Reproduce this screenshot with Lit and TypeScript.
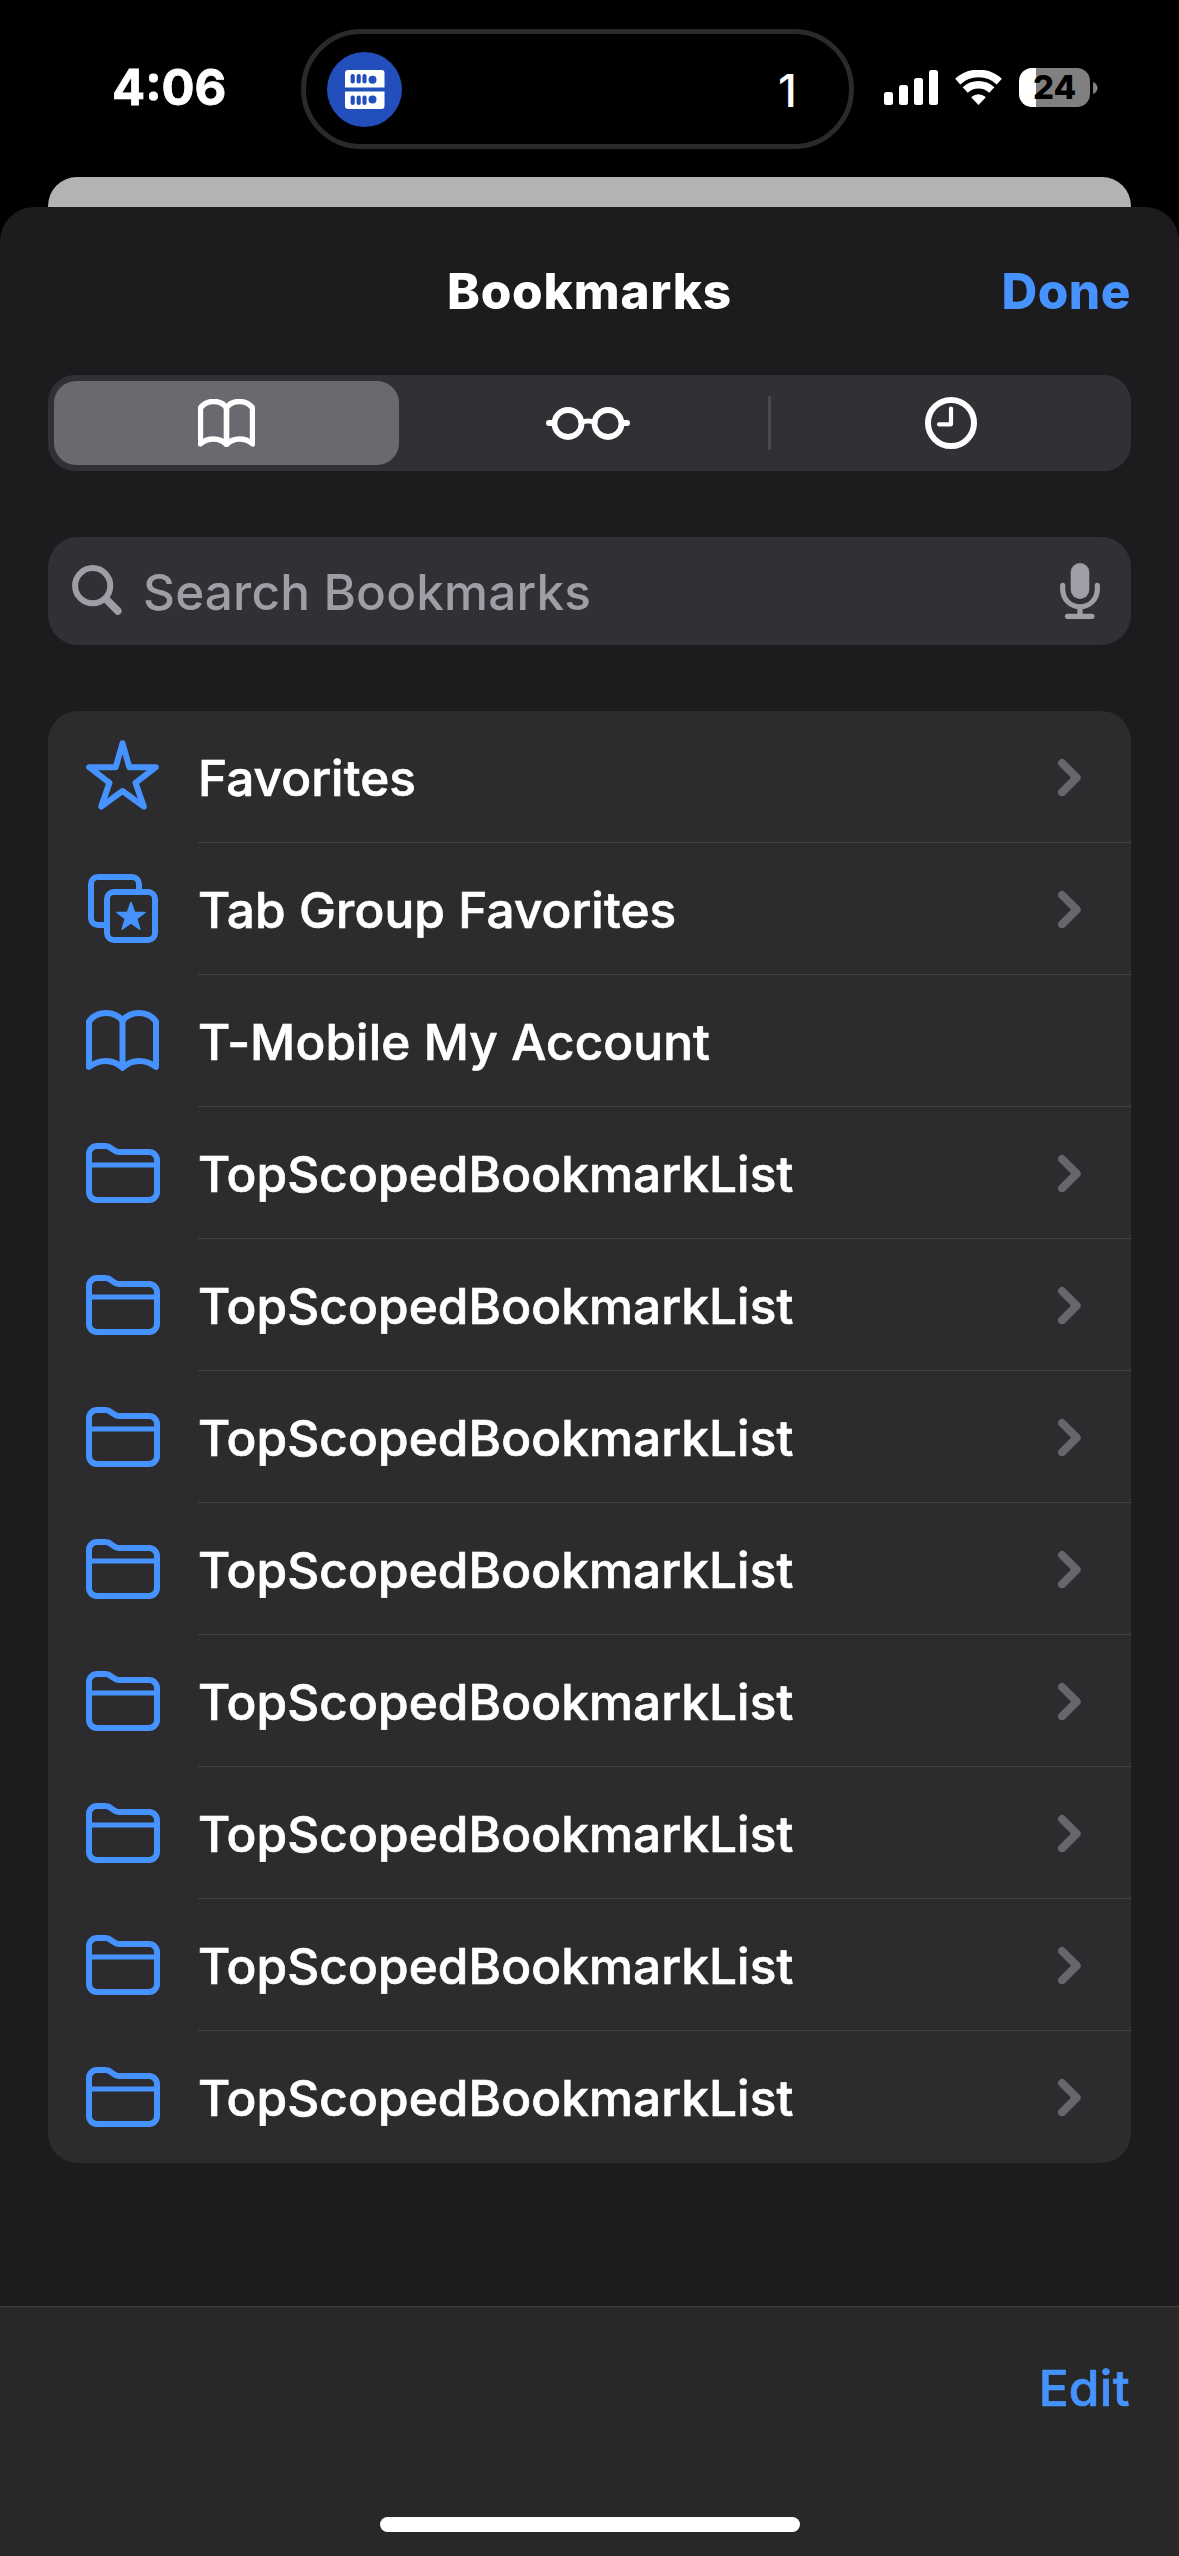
import { LitElement, html, css, svg } from "lit";
import { customElement } from "lit/decorators.js";

type RowIcon = "star" | "tabs" | "book" | "folder";
interface Bookmark {
  icon: RowIcon;
  label: string;
  opens: boolean;
}

const folder = (): Bookmark => ({ icon: "folder", label: "TopScopedBookmarkList", opens: true });

const bookmarks: Bookmark[] = [
  { icon: "star", label: "Favorites", opens: true },
  { icon: "tabs", label: "Tab Group Favorites", opens: true },
  { icon: "book", label: "T-Mobile My Account", opens: false },
  ...Array.from({ length: 8 }, folder),
];

const bookShape = svg`<path d="M36.5 11C33 6 27 3 20 3S7 6 3 11.5V57C8 53 13 51 20 51S32 53.5 36.5 58C41 53.5 46 51 53 51S65 53 70 57V11.5C66 6 60 3 53 3S40 6 36.5 11V57"/>`;

const rowIcons = {
  star: html`<svg class="line" width="74" height="74" viewBox="0 0 74 74">
    <path d="M36.5 3.2L43.3 27.2H69.8L49.5 42.8L57.8 66.6L36.5 51L15.2 66.6L23.5 42.8L3.2 27.2H29.7Z" />
  </svg>`,
  tabs: html`<svg class="line" width="70" height="70" viewBox="0 0 70 70">
    <path d="M51 16V10a7 7 0 0 0-7-7H10a7 7 0 0 0-7 7V44a7 7 0 0 0 7 7H18" stroke-linecap="butt" />
    <rect x="19" y="18" width="48" height="48" rx="7" />
    <path class="solid" d="M43 28.5L46.6 38.4H57L48.7 44.7L51.8 55.2L43 49L34.2 55.2L37.3 44.7L29 38.4H39.4Z" />
  </svg>`,
  book: html`<svg class="line" width="74" height="62" viewBox="0 0 74 62">${bookShape}</svg>`,
  folder: html`<svg class="line" width="74" height="60" viewBox="0 0 74 60">
    <path d="M3 11a8 8 0 0 1 8-8H19.500C23 3 24.300 4.400 26.500 6.200C28.800 8.100 29.700 9 32.500 9H63a8 8 0 0 1 8 8V49a8 8 0 0 1-8 8H11a8 8 0 0 1-8-8Z" />
    <path d="M3 22H71" stroke-width="5" />
  </svg>`,
};

@customElement("status-bar")
export class StatusBar extends LitElement {
  static styles = css`
    :host {
      display: grid;
      grid-template-columns: 301px 553px 1fr;
      height: 177px;
      box-sizing: border-box;
      padding-top: 29px;
      align-items: start;
      color: #fff;
    }
    .time {
      padding: 29px 0 0 112px;
      font-size: 49px;
      font-weight: 700;
      line-height: 60px;
      -webkit-text-stroke: 0.8px #fff;
    }
    .island {
      box-sizing: border-box;
      height: 120px;
      border: 5px solid #2a2a2a;
      border-radius: 60px;
      display: flex;
      align-items: center;
      justify-content: space-between;
      padding: 0 52px 0 21px;
    }
    .count {
      font-size: 45.500px;
      font-weight: 500;
      line-height: 60px;
      padding-top: 3px;
    }
    .system {
      display: flex;
      padding: 39px 0 0 30px;
      align-items: flex-start;
    }
    .signal {
      margin-top: 2px;
    }
    .wifi {
      margin: 2px 17px 0 17px;
    }
    .battery {
      width: 71px;
      height: 39px;
      border-radius: 13px;
      background: linear-gradient(90deg, #fff 17px, #808080 17px);
      color: #000;
      font-size: 33px;
      font-weight: 800;
      line-height: 39px;
      text-align: center;
    }
    .nub {
      margin: 14px 0 0 3px;
    }
  `;
  render() {
    return html`
      <div class="time">4:06</div>
      <div class="island">
        <svg width="75" height="75" viewBox="0 0 75 75">
          <circle cx="37.500" cy="37.500" r="37.500" fill="#234fbd" />
          <path fill="#fff" d="M18 35.500V21a3 3 0 0 1 3-3H54.500a3 3 0 0 1 3 3V35.500ZM18 39.500H57.500V54a3 3 0 0 1-3 3H21a3 3 0 0 1-3-3Z" />
          <path stroke="#234fbd" stroke-width="4.200" stroke-linecap="round" d="M25.700 24V29.500M31.700 24V29.500M37.500 24V29.500M25.700 45.500V51M31.700 45.500V51M37.500 45.500V51" />
          <circle cx="45.500" cy="27.800" r="4" fill="#234fbd" />
          <circle cx="45.500" cy="47.500" r="4" fill="#234fbd" />
        </svg>
        <span class="count">1</span>
      </div>
      <div class="system">
        <svg class="signal" width="54" height="35" viewBox="0 0 54 35" fill="#fff">
          <rect x="0" y="22" width="9" height="13" rx="2.500" />
          <rect x="15" y="15" width="9" height="20" rx="2.500" />
          <rect x="30" y="8" width="9" height="27" rx="2.500" />
          <rect x="45" y="0" width="9" height="35" rx="2.500" />
        </svg>
        <svg class="wifi" width="47" height="35" viewBox="0 0 47 35" fill="none" stroke="#fff">
          <path d="M2.700 11.600A30.500 30.500 0 0 1 44.300 11.600" stroke-width="7.600" />
          <path d="M10.200 20A19.400 19.400 0 0 1 36.800 20" stroke-width="7.400" />
          <path d="M17.200 27.300A9.500 9.500 0 0 1 29.800 27.300L23.500 34Z" fill="#fff" stroke-width="1.500" stroke-linejoin="round" />
        </svg>
        <div class="battery">24</div>
        <svg class="nub" width="5" height="12" viewBox="0 0 5 12"><path d="M0 0C6 2 6 10 0 12Z" fill="#808080" /></svg>
      </div>
    `;
  }
}

@customElement("bookmark-row")
export class BookmarkRow extends LitElement {
  static properties = { item: { attribute: false } };
  declare item: Bookmark;
  static styles = css`
    :host {
      display: flex;
      height: 132px;
    }
    .icon {
      flex: none;
      width: 150px;
      display: flex;
      align-items: center;
      justify-content: center;
    }
    .line {
      fill: none;
      stroke: #4693ff;
      stroke-width: 6;
      stroke-linejoin: round;
      stroke-linecap: round;
    }
    .solid {
      fill: #4693ff;
      stroke-width: 1.500;
    }
    .body {
      flex: 1;
      display: flex;
      align-items: center;
      justify-content: space-between;
      padding: 0 50px 0 0;
      border-bottom: 1px solid #434346;
    }
    :host(:last-child) .body {
      border-bottom-color: transparent;
    }
    .label {
      color: #fff;
      font-size: 49.500px;
      font-weight: 500;
      line-height: 60px;
      letter-spacing: 0.1px;
      -webkit-text-stroke: 0.7px #fff;
      padding-top: 2px;
      white-space: nowrap;
    }
  `;
  render() {
    return html`
      <div class="icon">${rowIcons[this.item.icon]}</div>
      <div class="body">
        <span class="label">${this.item.label}</span>
        ${this.item.opens
          ? html`<svg width="23" height="38" viewBox="0 0 23 38" fill="none" stroke="#67676b" stroke-width="8" stroke-linecap="round" stroke-linejoin="round">
              <path d="M4 5L18.700 19.700L4 34.400" />
            </svg>`
          : ""}
      </div>
    `;
  }
}

@customElement("app-root")
export class AppRoot extends LitElement {
  static styles = css`
    :host {
      display: flex;
      flex-direction: column;
      width: 1179px;
      height: 2556px;
      overflow: hidden;
      background: #000;
      font-family: Inter, "Liberation Sans", sans-serif;
    }
    .behind {
      height: 30px;
      margin: 0 48px;
      flex: none;
      background: #b3b3b3;
      border-radius: 29px 29px 0 0;
    }
    .sheet {
      flex: 1;
      display: flex;
      flex-direction: column;
      background: #1c1c1e;
      border-radius: 34px 34px 0 0;
    }
    .header {
      height: 168px;
      box-sizing: border-box;
      padding: 0 48px;
      display: grid;
      grid-template-columns: 1fr auto 1fr;
      align-items: center;
      font-size: 49.500px;
      font-weight: 800;
      line-height: 60px;
    }
    .title {
      grid-column: 2;
      color: #fff;
      letter-spacing: 0.8px;
    }
    .done {
      color: #4693ff;
      text-align: right;
      letter-spacing: 0.5px;
    }
    .segments {
      height: 96px;
      margin: 0 48px;
      box-sizing: border-box;
      padding: 6px 0 6px 6px;
      border-radius: 27px;
      background: #313035;
      display: grid;
      grid-template-columns: 354px 360px 3px 1fr;
      align-items: center;
    }
    .segment {
      display: flex;
      align-items: center;
      justify-content: center;
      height: 84px;
    }
    .segment.on {
      background: #6a696f;
      border-radius: 22px;
      margin-right: 9px;
    }
    .divider {
      height: 54px;
      border-radius: 2px;
      background: #4a494f;
    }
    .mark {
      fill: none;
      stroke: #fff;
      stroke-linecap: round;
      stroke-linejoin: round;
    }
    .search {
      height: 108px;
      margin: 66px 48px;
      box-sizing: border-box;
      padding: 0 31px 0 24px;
      border-radius: 30px;
      background: #313035;
      display: flex;
      align-items: center;
    }
    .placeholder {
      flex: 1;
      padding: 1px 0 0 20px;
      color: #9f9ea7;
      font-size: 49.500px;
      font-weight: 500;
      line-height: 60px;
      letter-spacing: 0.15px;
    }
    .glass {
      margin-top: -2px;
    }
    .list {
      margin: 0 48px;
      border-radius: 30px;
      background: #2c2c2e;
    }
    .toolbar {
      margin-top: auto;
      height: 250px;
      box-sizing: border-box;
      border-top: 1px solid #404042;
      background: #282828;
      display: flex;
      flex-direction: column;
      padding: 51px 0 24px;
    }
    .edit {
      align-self: flex-end;
      margin-right: 49px;
      color: #4693ff;
      font-size: 49.500px;
      font-weight: 500;
      line-height: 60px;
      letter-spacing: 0.4px;
      -webkit-text-stroke: 0.7px #4693ff;
    }
    .home {
      margin: auto auto 0;
      width: 420px;
      height: 15px;
      border-radius: 8px;
      background: #fff;
    }
  `;
  render() {
    return html`
      <status-bar></status-bar>
      <div class="behind"></div>
      <div class="sheet">
        <div class="header">
          <div class="title">Bookmarks</div>
          <div class="done">Done</div>
        </div>
        <div class="segments">
          <div class="segment on">
            <svg class="mark" width="57" height="48" viewBox="0 0 73 61" stroke-width="7.200">${bookShape}</svg>
          </div>
          <div class="segment">
            <svg class="mark" width="84" height="33" viewBox="0 0 84 33" stroke-width="5.800">
              <circle cx="22" cy="16.500" r="13.500" />
              <circle cx="62" cy="16.500" r="13.500" />
              <path d="M3 16H7M77 16H81" stroke-width="6" />
              <path d="M35 15.500Q42 12.500 49 15.500" stroke-width="5" />
            </svg>
          </div>
          <div class="divider"></div>
          <div class="segment">
            <svg class="mark" width="52" height="52" viewBox="0 0 52 52">
              <circle cx="26" cy="26" r="23" stroke-width="6" />
              <path d="M26 11.500V27.300H14" stroke-width="4.200" />
            </svg>
          </div>
        </div>
        <div class="search">
          <svg class="glass" width="51" height="51" viewBox="0 0 51 51" fill="none" stroke="#9f9ea7" stroke-linecap="round">
            <circle cx="20.700" cy="20.700" r="17.600" stroke-width="6" />
            <path d="M34 34L45.800 46" stroke-width="7.500" />
          </svg>
          <div class="placeholder">Search Bookmarks</div>
          <svg width="40" height="56" viewBox="0 0 40 56" fill="none" stroke="#9f9ea7" stroke-width="5.200" stroke-linecap="round">
            <rect x="10.700" y="0" width="18.600" height="36" rx="9.300" fill="#9f9ea7" stroke="none" />
            <path d="M2.700 22.300V26.500a17.300 17.300 0 0 0 34.600 0V22.300M20 44V53M7.500 53.300H32" />
          </svg>
        </div>
        <div class="list">${bookmarks.map((b) => html`<bookmark-row .item=${b}></bookmark-row>`)}</div>
        <div class="toolbar">
          <div class="edit">Edit</div>
          <div class="home"></div>
        </div>
      </div>
    `;
  }
}
